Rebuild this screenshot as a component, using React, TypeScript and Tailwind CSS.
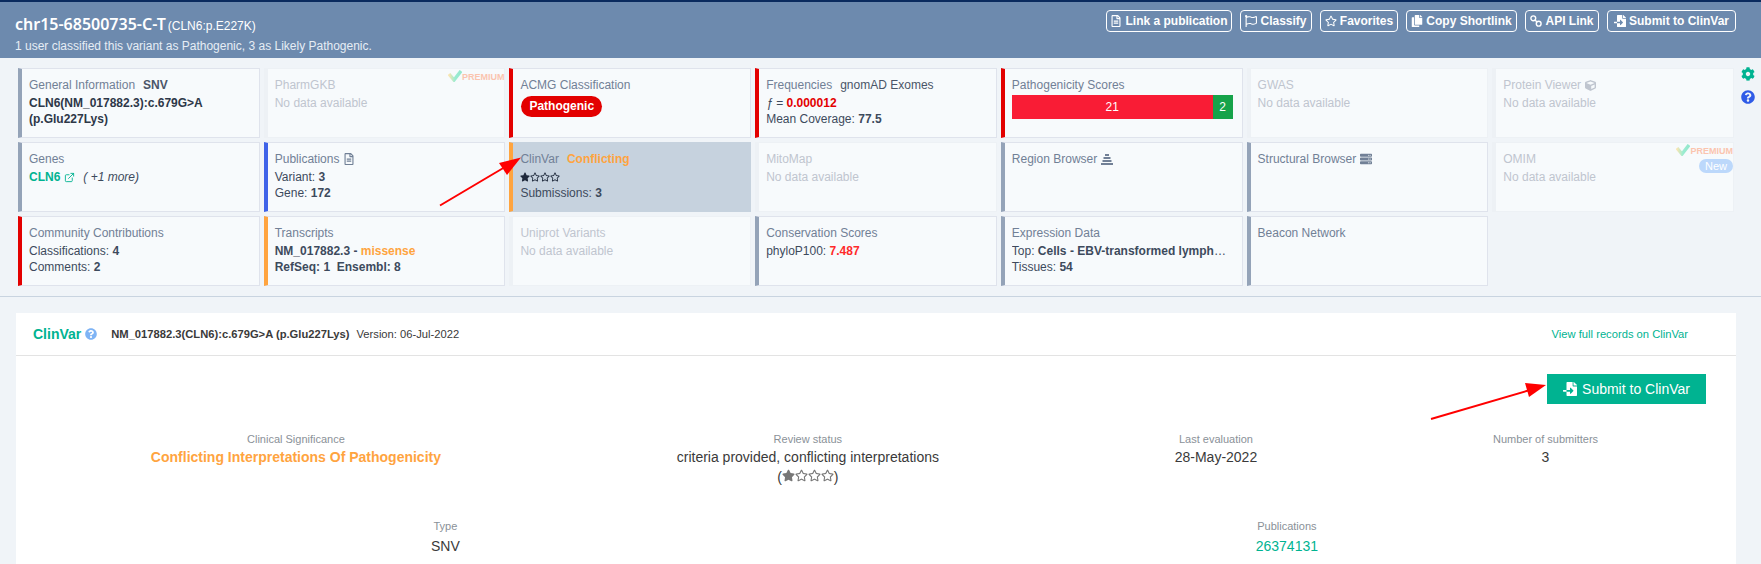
import { ReactNode } from 'react';
import {
  FaRegFileAlt,
  FaRegFlag,
  FaRegStar,
  FaStar,
  FaCopy,
  FaFileImport,
  FaCog,
  FaQuestionCircle,
  FaServer,
  FaCube,
} from 'react-icons/fa';
import { FiExternalLink } from 'react-icons/fi';

const LinkIcon = () => (
  <svg width="12" height="12" viewBox="0 0 12 12" fill="none" stroke="currentColor" strokeWidth="1.4">
    <circle cx="3.3" cy="3.3" r="2.4" />
    <circle cx="8.7" cy="8.7" r="2.4" />
    <line x1="5" y1="5" x2="7" y2="7" />
  </svg>
);

const headerButtons = [
  { label: 'Link a publication', icon: <FaRegFileAlt />, width: 'w-[126px]' },
  { label: 'Classify', icon: <FaRegFlag />, width: 'w-[72px]' },
  { label: 'Favorites', icon: <FaRegStar />, width: 'w-[78px]' },
  { label: 'Copy Shortlink', icon: <FaCopy />, width: 'w-[111px]' },
  { label: 'API Link', icon: <LinkIcon />, width: 'w-[74px]' },
  { label: 'Submit to ClinVar', icon: <FaFileImport />, width: 'w-[129px]' },
];

interface CardProps {
  title: ReactNode;
  accent?: string;
  disabled?: boolean;
  active?: boolean;
  children?: ReactNode;
}

const Card = ({ title, accent = 'border-l-[#94a3b8]', disabled, active, children }: CardProps) => (
  <div
    className={`relative h-[70px] min-w-0 border border-l-4 pl-[7px] pr-[9px] pt-2 text-xs ${
      disabled
        ? 'border-[#edf1f5] border-l-[#edf1f5] bg-[#f7fafc] text-[#bfc5cf]'
        : active
          ? 'border-[#c6d2de] bg-[#c6d2de] text-[#3d4a5c]'
          : 'border-[#dfe3ec] bg-[#f7fafc] text-[#3d4a5c]'
    } ${disabled ? '' : accent}`}
  >
    <div className={`mb-[2px] flex h-4 items-center leading-4 ${disabled ? '' : 'text-[#718096]'}`}>{title}</div>
    <div className="leading-4">{children}</div>
  </div>
);

const NoData = () => <span>No data available</span>;

const Premium = ({ id }: { id: string }) => (
  <div className="absolute right-0 top-[1px] flex items-end opacity-50">
    <svg width="14" height="12" viewBox="0 0 14 12" fill="none">
      <defs>
        <linearGradient id={id} x1="0" x2="1" y1="0" y2="0">
          <stop offset="0" stopColor="#ffd36b" />
          <stop offset="0.5" stopColor="#3fe0a8" />
          <stop offset="1" stopColor="#35d6a0" />
        </linearGradient>
      </defs>
      <path d="M1 4 L6 10 L13 1" stroke={`url(#${id})`} strokeWidth="3.4" />
    </svg>
    <span className="text-[9px] font-bold leading-[9px] text-[#ff8f63]">PREMIUM</span>
  </div>
);

const Stars = ({ size = 'text-[10px]' }: { size?: string }) => (
  <span className={`inline-flex items-center ${size}`}>
    <FaStar />
    <FaRegStar />
    <FaRegStar />
    <FaRegStar />
  </span>
);

const RegionIcon = () => (
  <svg width="12" height="11" viewBox="0 0 12 11" className="ml-1" fill="currentColor">
    <rect x="4" y="0" width="4" height="2" />
    <rect x="2.5" y="3" width="7" height="2" />
    <rect x="1.5" y="6" width="9" height="2" />
    <rect x="0" y="9" width="12" height="2" />
  </svg>
);

const Stat = ({ label, children }: { label: string; children: ReactNode }) => (
  <div className="text-center">
    <div className="text-[11px] leading-4 text-[#8a9198]">{label}</div>
    {children}
  </div>
);

export default function App() {
  return (
    <div className="relative flex h-[564px] w-[1761px] flex-col overflow-hidden bg-[#f0f4f8] font-['Liberation_Sans',Arial,sans-serif]">
      <header className="flex h-[58px] shrink-0 justify-between border-t-2 border-[#0a2a5e] bg-[#6d8aae] pl-[15px] pr-[25px] text-white">
        <div className="pt-[10px]">
          <div className="flex items-baseline leading-[20px]">
            <span className="font-['Noto_Sans',sans-serif] text-base font-semibold">chr15-68500735-C-T</span>
            <span className="ml-[2px] text-xs">(CLN6:p.E227K)</span>
          </div>
          <div className="mt-[2px] text-xs leading-4 text-[#e6edf5]">1 user classified this variant as Pathogenic, 3 as Likely Pathogenic.</div>
        </div>
        <div className="flex gap-2 pt-2">
          {headerButtons.map((b) => (
            <button key={b.label} className={`flex h-[22px] items-center justify-center gap-[3px] rounded-sm border border-white text-xs font-bold text-white ${b.width}`}>
              {b.icon}
              {b.label}
            </button>
          ))}
        </div>
      </header>

      <section className="flex shrink-0 border-b border-[#c9d4e0] pb-[10px] pl-[18px] pt-[10px]">
        <div className="grid w-[1716px] grid-cols-7 gap-1">
          <Card title={<>General Information<b className="ml-2 text-[#4a5568]">SNV</b></>}>
            <b className="text-[#2d3748]">CLN6(NM_017882.3):c.679G&gt;A (p.Glu227Lys)</b>
          </Card>
          <Card title="PharmGKB" disabled>
            <NoData />
            <Premium id="premium-pharmgkb" />
          </Card>
          <Card title="ACMG Classification" accent="border-l-[#e30000]">
            <span className="ml-px mt-px inline-block h-[21px] rounded-full bg-[#e30000] px-2 font-bold leading-[21px] text-white">Pathogenic</span>
          </Card>
          <Card title={<>Frequencies<span className="ml-2 text-[#4a5568]">gnomAD Exomes</span></>} accent="border-l-[#e30000]">
            <div>
              <i>ƒ</i> = <b className="text-[#e30000]">0.000012</b>
            </div>
            <div>
              Mean Coverage: <b>77.5</b>
            </div>
          </Card>
          <Card title="Pathogenicity Scores" accent="border-l-[#e30000]">
            <div className="mt-px flex h-6 text-white">
              <div className="flex flex-1 items-center justify-center bg-[#f91c35]">21</div>
              <div className="flex w-5 items-center justify-center bg-[#16a34a]">2</div>
            </div>
          </Card>
          <Card title="GWAS" disabled>
            <NoData />
          </Card>
          <Card title={<>Protein Viewer<FaCube className="ml-1 text-[11px]" /></>} disabled>
            <NoData />
          </Card>

          <Card title="Genes">
            <b className="text-[#00b391]">CLN6</b>
            <FiExternalLink className="ml-1 inline text-[11px] text-[#00b391]" />
            <i className="ml-2">( +1 more)</i>
          </Card>
          <Card title={<>Publications<FaRegFileAlt className="ml-1" /></>} accent="border-l-[#3f63e8]">
            <div>
              Variant: <b>3</b>
            </div>
            <div>
              Gene: <b>172</b>
            </div>
          </Card>
          <Card title={<>ClinVar<b className="ml-2 text-[#ffa43f]">Conflicting</b></>} accent="border-l-[#ffa43f]" active>
            <div className="flex h-4 items-center text-[#1f2a3c]">
              <Stars />
            </div>
            <div>
              Submissions: <b>3</b>
            </div>
          </Card>
          <Card title="MitoMap" disabled>
            <NoData />
          </Card>
          <Card title={<>Region Browser<RegionIcon /></>} />
          <Card title={<>Structural Browser<FaServer className="ml-1" /></>} />
          <Card title="OMIM" disabled>
            <NoData />
            <Premium id="premium-omim" />
            <span className="absolute right-0 top-[16px] h-[14px] rounded-full bg-[#bcd8fb] px-[6px] text-[11px] leading-[14px] text-white">New</span>
          </Card>

          <Card title="Community Contributions" accent="border-l-[#e30000]">
            <div>
              Classifications: <b>4</b>
            </div>
            <div>
              Comments: <b>2</b>
            </div>
          </Card>
          <Card title="Transcripts" accent="border-l-[#ffa43f]">
            <div className="font-bold">
              NM_017882.3 - <span className="text-[#ffa43f]">missense</span>
            </div>
            <div className="font-bold">RefSeq: 1&nbsp;&nbsp;Ensembl: 8</div>
          </Card>
          <Card title="Uniprot Variants" disabled>
            <NoData />
          </Card>
          <Card title="Conservation Scores">
            phyloP100: <b className="text-[#ff2a2a]">7.487</b>
          </Card>
          <Card title="Expression Data">
            <div className="truncate pr-1">
              Top: <b>Cells - EBV-transformed lymphocytes</b>
            </div>
            <div>
              Tissues: <b>54</b>
            </div>
          </Card>
          <Card title="Beacon Network" />
        </div>
        <div className="-mt-px ml-[7px] flex flex-col items-center gap-[9px] text-sm">
          <FaCog className="text-[#00b391]" />
          <FaQuestionCircle className="text-[#2f5be7]" />
        </div>
      </section>

      <section className="ml-4 mt-4 w-[1720px] flex-1 bg-white text-[#3a3a3a]">
        <div className="flex h-[43px] items-center justify-between border-b border-[#e3e3e3] pl-[17px] pr-[48px]">
          <div className="flex items-center">
            <span className="text-sm font-bold text-[#00b391]">ClinVar</span>
            <FaQuestionCircle className="ml-1 text-xs text-[#7fb4f5]" />
            <b className="ml-[14px] text-[11.2px]">NM_017882.3(CLN6):c.679G&gt;A (p.Glu227Lys)</b>
            <span className="ml-[7px] text-[11.2px]">Version: 06-Jul-2022</span>
          </div>
          <a className="text-[11.2px] text-[#00b391]">View full records on ClinVar</a>
        </div>
        <div className="flex justify-end pr-[30px] pt-[18px]">
          <button className="flex h-[30px] w-[159px] items-center justify-center gap-[5px] bg-[#00b391] text-sm text-white">
            <FaFileImport />
            Submit to ClinVar
          </button>
        </div>
        <div className="flex justify-around pl-[17px] pr-5 pt-[27px]">
          <Stat label="Clinical Significance">
            <div className="text-sm font-bold leading-5 text-[#ffa43f]">Conflicting Interpretations Of Pathogenicity</div>
          </Stat>
          <Stat label="Review status">
            <div className="text-sm leading-5">criteria provided, conflicting interpretations</div>
            <div className="flex items-center justify-center text-sm leading-5">
              (<span className="text-[#777]"><Stars size="text-[13px]" /></span>)
            </div>
          </Stat>
          <Stat label="Last evaluation">
            <div className="text-sm leading-5">28-May-2022</div>
          </Stat>
          <Stat label="Number of submitters">
            <div className="text-sm leading-5">3</div>
          </Stat>
        </div>
        <div className="flex justify-around pl-[17px] pr-5 pt-[31px]">
          <Stat label="Type">
            <div className="mt-[2px] text-sm leading-5">SNV</div>
          </Stat>
          <Stat label="Publications">
            <div className="mt-[2px] text-sm leading-5 text-[#00b391]">26374131</div>
          </Stat>
        </div>
      </section>

      {/* annotation arrows drawn over the page */}
      <svg className="pointer-events-none absolute left-0 top-0" width="1761" height="564">
        <line x1="440" y1="205.5" x2="505" y2="167" stroke="#ff0000" strokeWidth="2" />
        <polygon points="521,157.5 499,163 507,175" fill="#ff0000" />
        <line x1="1431" y1="419" x2="1530" y2="390" stroke="#ff0000" strokeWidth="2" />
        <polygon points="1546,385 1525,383 1529,397" fill="#ff0000" />
      </svg>
    </div>
  );
}
